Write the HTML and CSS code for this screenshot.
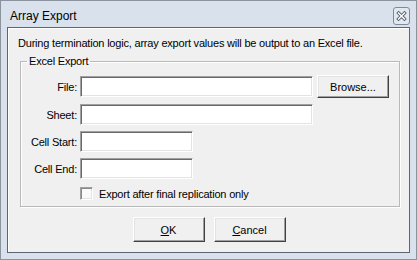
FILE: index.html
```html
<!DOCTYPE html>
<html lang="en">
<head>
    <meta charset="UTF-8">
    <meta name="viewport" content="width=device-width, initial-scale=1.0">
    <title>Array Export</title>
    <link rel="stylesheet" href="styles.css">
</head>
<body>
    <div class="window">
        <div class="title-bar">
            <span class="title">Array Export</span>
            <button class="close-btn" title="Close">
                <svg width="17" height="18" viewBox="0 0 17 18">
                    <rect x="0.5" y="0.5" width="16" height="17" rx="2.5" fill="#e1e8f0" stroke="#7f8a98"/>
                    <path d="M5.5 6 L11.5 12 M11.5 6 L5.5 12" stroke="#5a6470" stroke-width="3.2" stroke-linecap="square"/>
                    <path d="M5.5 6 L11.5 12 M11.5 6 L5.5 12" stroke="#ffffff" stroke-width="1.4" stroke-linecap="square"/>
                </svg>
            </button>
        </div>
        <div class="client">
            <p class="intro">During termination logic, array export values will be output to an Excel file.</p>
            <fieldset class="group">
                <legend>Excel Export</legend>
                <div class="form-grid">
                    <label for="file">File:</label>
                    <div class="field-row">
                        <input type="text" id="file" class="text-input wide">
                        <button class="win-btn browse">Browse...</button>
                    </div>
                    <label for="sheet">Sheet:</label>
                    <input type="text" id="sheet" class="text-input wide">
                    <label for="cellStart">Cell Start:</label>
                    <input type="text" id="cellStart" class="text-input short">
                    <label for="cellEnd">Cell End:</label>
                    <input type="text" id="cellEnd" class="text-input short">
                    <span></span>
                    <label class="check-row">
                        <span class="check-box"></span>
                        Export after final replication only
                    </label>
                </div>
            </fieldset>
            <div class="actions">
                <button class="win-btn"><u>O</u>K</button>
                <button class="win-btn"><u>C</u>ancel</button>
            </div>
        </div>
    </div>
</body>
</html>
```

FILE: styles.css
```css
body {
    margin: 0;
    font-family: "Liberation Sans", Arial, sans-serif;
    font-size: 11px;
    letter-spacing: -0.2px;
    color: #000;
    background: #ffffff;
}

.window {
    width: 417px;
    height: 260px;
    box-sizing: border-box;
    border: 1px solid #8b939d;
    background: #d9e2ec;
    padding: 0 6px 6px 6px;
    display: flex;
    flex-direction: column;
}

.title-bar {
    height: 26px;
    box-sizing: border-box;
    padding: 3px 0 0 3px;
    display: flex;
    align-items: center;
    justify-content: space-between;
}

.title {
    font-size: 12px;
    letter-spacing: 0;
}

.close-btn {
    padding: 0;
    border: none;
    background: none;
    width: 17px;
    height: 18px;
    display: block;
}

.close-btn svg {
    display: block;
}

.client {
    flex: 1;
    background: #f0f0f0;
    border: 1px solid #5c6570;
    box-shadow: inset 1px 1px 0 #ffffff;
    padding: 9px 9px 0 10px;
    display: flex;
    flex-direction: column;
}

.intro {
    margin: 0;
    line-height: 13px;
}

.group {
    margin: 5px 0 0 2px;
    padding: 0 0 6px 0;
    border: 1px solid #b9b9b9;
    box-shadow: inset 1px 1px 0 #ffffff, 1px 1px 0 #ffffff;
}

.group legend {
    margin-left: 6px;
    padding: 0 2px;
    line-height: 13px;
}

.form-grid {
    display: grid;
    grid-template-columns: 56px auto;
    column-gap: 3px;
    row-gap: 6px;
    align-items: center;
    margin-top: 7px;
}

.form-grid > label {
    text-align: right;
}

.field-row {
    display: flex;
    align-items: center;
    gap: 4px;
}

.text-input {
    height: 21px;
    box-sizing: border-box;
    margin: 0;
    padding: 1px 3px;
    font: inherit;
    background: #fff;
    border: 1px solid;
    border-color: #a0a0a0 #ffffff #ffffff #a0a0a0;
    box-shadow: inset 1px 1px 0 #696969, inset -1px -1px 0 #e3e3e3;
    outline: none;
}

.wide {
    width: 233px;
}

.short {
    width: 113px;
}

.win-btn {
    width: 72px;
    height: 25px;
    box-sizing: border-box;
    margin: 0;
    padding: 0;
    font: inherit;
    color: #000;
    background: #f0f0f0;
    border: 1px solid;
    border-color: #ffffff #404040 #404040 #ffffff;
    box-shadow: inset -1px -1px 0 #a0a0a0, inset 1px 1px 0 #e3e3e3;
}

.browse {
    height: 23px;
}

.check-row {
    display: flex;
    align-items: center;
    gap: 6px;
    margin-top: 2px;
}

.check-box {
    width: 13px;
    height: 13px;
    box-sizing: border-box;
    background: #fafafa;
    border: 1px solid;
    border-color: #a0a0a0 #ffffff #ffffff #a0a0a0;
    box-shadow: inset 1px 1px 0 #8a8a8a, inset -1px -1px 0 #e3e3e3;
}

.actions {
    display: flex;
    justify-content: center;
    gap: 9px;
    margin-top: 10px;
}
```
